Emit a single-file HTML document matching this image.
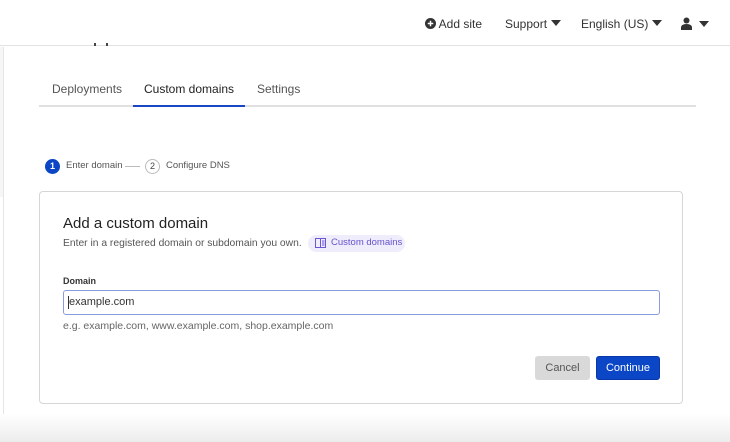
<!DOCTYPE html>
<html><head><meta charset="utf-8"><style>
*{margin:0;padding:0;box-sizing:border-box}
body{width:730px;height:442px;overflow:hidden;background:#fff;font-family:"Liberation Sans",Arial,sans-serif;color:#333;position:relative}
.a{position:absolute;white-space:nowrap}
.hdr{position:absolute;left:0;top:0;width:730px;height:46px;border-bottom:1px solid #e2e2e2;background:#fff}
.nav{font-size:12px;color:#333;top:17px}
.tri{display:inline-block;width:0;height:0;border-left:5px solid transparent;border-right:5px solid transparent;border-top:6px solid #333;vertical-align:2px;margin-left:4px}
</style></head><body>
<div class="a" style="left:0;top:0;width:730px;height:1px;background:#111"></div>
<div class="hdr"></div>
<div class="a" style="left:3px;top:47px;width:1px;height:395px;background:#e5e5e5"></div>
<div class="a" style="left:0;top:47px;width:3px;height:150px;background:#f6f6f6"></div>
<div class="a nav" style="left:425px"><svg width="11" height="11" viewBox="0 0 12 12" style="vertical-align:-1px"><circle cx="6" cy="6" r="6" fill="#333"/><path d="M6 3v6M3 6h6" stroke="#fff" stroke-width="1.6"/></svg> Add site</div>
<div class="a nav" style="left:505px">Support<span class="tri"></span></div>
<div class="a nav" style="left:581px">English (US)<span class="tri"></span></div>
<div class="a nav" style="left:680px"><svg width="13" height="13" viewBox="0 0 13 13" style="vertical-align:-1px"><circle cx="6.5" cy="3.5" r="3" fill="#333"/><path d="M1 13v-2.5c0-2 2-3.5 5.5-3.5s5.5 1.5 5.5 3.5V13z" fill="#333"/></svg><span class="tri" style="margin-left:6px"></span></div>
<div class="a" style="left:106px;top:43px;width:2px;height:3px;background:#444"></div>
<div class="a" style="left:94px;top:43px;width:2px;height:3px;background:#444"></div>

<div class="a" style="left:52px;top:82px;font-size:12px;color:#555">Deployments</div>
<div class="a" style="left:144px;top:82px;font-size:12px;color:#222">Custom domains</div>
<div class="a" style="left:257px;top:82px;font-size:12px;color:#555">Settings</div>
<div class="a" style="left:39px;top:105px;width:657px;height:2px;background:#e0e0e0"></div>
<div class="a" style="left:133px;top:105px;width:112px;height:2px;background:#1947c4"></div>

<div class="a" style="left:45px;top:159px;width:15px;height:15px;border-radius:50%;background:#0a46c6;color:#fff;font-size:9px;text-align:center;line-height:15px;font-weight:bold">1</div>
<div class="a" style="left:66px;top:160px;font-size:9.5px;color:#555">Enter domain</div>
<div class="a" style="left:125px;top:166px;width:15px;height:1px;background:#bbb"></div>
<div class="a" style="left:145px;top:159px;width:15px;height:15px;border-radius:50%;border:1px solid #bbb;color:#444;font-size:9px;text-align:center;line-height:13px">2</div>
<div class="a" style="left:166px;top:160px;font-size:9.5px;color:#555">Configure DNS</div>

<div class="a" style="left:39px;top:191px;width:644px;height:213px;border:1px solid #d6d6d6;border-radius:4px"></div>
<div class="a" style="left:63px;top:215px;font-size:15px;color:#222">Add a custom domain</div>
<div class="a" style="left:63px;top:238px;font-size:10.3px;color:#555">Enter in a registered domain or subdomain you own.</div>
<div class="a" style="left:308px;top:235px;width:97px;height:17px;border-radius:9px;background:#efecfb"></div>
<svg class="a" style="left:315px;top:238px" width="11" height="10" viewBox="0 0 11 10"><rect x="0.5" y="0.5" width="10" height="9" fill="none" stroke="#6c55d6"/><path d="M5.5 0.5v9M7 3h2.5M7 5h2.5M7 7h2.5" stroke="#6c55d6"/></svg>
<div class="a" style="left:331px;top:237px;font-size:9.5px;color:#6553cc">Custom domains</div>

<div class="a" style="left:63px;top:276px;font-size:9px;color:#333;font-weight:bold">Domain</div>
<div class="a" style="left:63px;top:290px;width:597px;height:25px;border:1px solid #8a9be0;border-radius:3px"></div>
<div class="a" style="left:68px;top:296px;width:1px;height:13px;background:#333"></div>
<div class="a" style="left:69px;top:296px;font-size:11px;color:#333">example.com</div>
<div class="a" style="left:63px;top:320px;font-size:10.5px;color:#666">e.g. example.com, www.example.com, shop.example.com</div>

<div class="a" style="left:535px;top:356px;width:55px;height:24px;border-radius:3px;background:#d9d9d9;color:#555;font-size:11px;text-align:center;line-height:24px">Cancel</div>
<div class="a" style="left:596px;top:356px;width:64px;height:24px;border-radius:3px;background:#0a46c6;border:1px solid #0838a8;color:#fff;font-size:11px;text-align:center;line-height:22px">Continue</div>

<div class="a" style="left:0;top:414px;width:730px;height:28px;background:linear-gradient(#fff,#ececec)"></div>
</body></html>
